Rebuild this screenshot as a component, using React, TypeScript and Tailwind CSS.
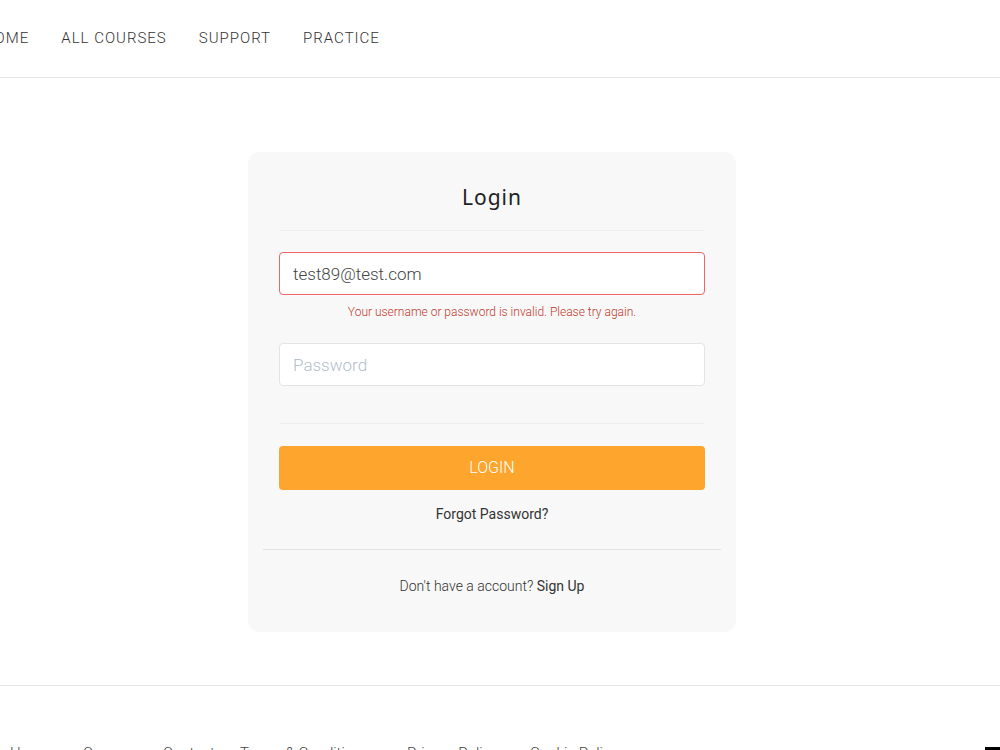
import React from 'react';

const navItems = ['HOME', 'ALL COURSES', 'SUPPORT', 'PRACTICE'];
const footerLinks = [
  { label: 'Home', w: 'w-[73px]' },
  { label: 'Courses', w: 'w-[80px]' },
  { label: 'Contact', w: 'w-[77px]' },
  { label: 'Terms & Conditions', w: 'w-[167px]' },
  { label: 'Privacy Policy', w: 'w-[123px]' },
  { label: 'Cookie Policy', w: 'w-auto' },
];

export default function App() {
  return (
    <div className="relative h-[750px] w-[1000px] overflow-hidden bg-white font-['Roboto',sans-serif]">
      {/* Header */}
      <header className="h-[78px] border-b border-[#e6e6e6]">
        <nav className="-ml-[17px] flex h-full items-center gap-[32px] text-[15px] font-light tracking-[1px] text-[#333]">
          {navItems.map((item) => (
            <a key={item} href="#" className="leading-none">
              {item}
            </a>
          ))}
        </nav>
      </header>

      {/* Login card */}
      <main className="h-[608px] border-b border-[#e6e6e6] pt-[74px]">
        <div className="ml-[248px] h-[480px] w-[488px] rounded-[12px] bg-[#f8f8f8] px-[15px]">
          <div className="px-[16px]">
            <h1 className="border-b border-[#eeeeee] pt-[30px] pb-[18px] text-center font-['Noto_Sans',sans-serif] text-[21px] leading-[30px] tracking-[1px] text-[#222]">
              Login
            </h1>
            <div className="pt-[21px]">
              <input
                defaultValue="test89@test.com"
                className="h-[43px] w-full rounded-[4px] border border-[#f26565] bg-white px-[13px] text-[17px] font-light text-[#444] outline-none"
              />
              <p className="mt-[8px] text-center text-[12px] font-light text-[#c0392b]">
                Your username or password is invalid. Please try again.
              </p>
              <input
                type="password"
                placeholder="Password"
                className="mt-[22px] h-[43px] w-full rounded-[4px] border border-[#e4e4e4] bg-white px-[13px] text-[17px] font-light text-[#444] outline-none placeholder:text-[#b3c0cc]"
              />
            </div>
            <div className="mt-[37px] border-t border-[#eeeeee] pt-[22px]">
              <button className="h-[44px] w-full rounded-[4px] bg-[#fda52c] text-[16px] font-light text-white">
                LOGIN
              </button>
              <p className="mt-[14px] text-center text-[14px] text-[#333]">Forgot Password?</p>
            </div>
          </div>
          <div className="mt-[24px] border-t border-[#e2e5e8] pt-[26px] text-center text-[14px] font-light text-[#333]">
            Don't have a account? <a href="#" className="font-normal text-[#333]">Sign Up</a>
          </div>
        </div>
      </main>

      {/* Footer */}
      <footer className="pt-[56px]">
        <ul className="ml-[10px] flex text-[15px] font-light text-[#444]">
          {footerLinks.map((l) => (
            <li key={l.label} className={`${l.w} shrink-0 whitespace-nowrap`}>
              {l.label}
            </li>
          ))}
        </ul>
      </footer>
      <div className="absolute right-0 bottom-0 h-[3px] w-[15px] bg-black" />
    </div>
  );
}
